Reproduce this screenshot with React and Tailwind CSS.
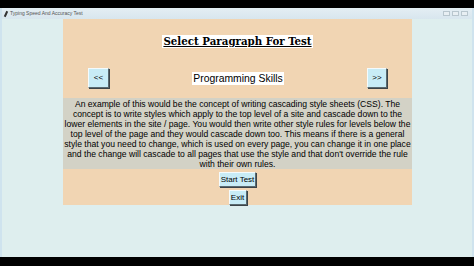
import React from 'react';

const lines = [
  'An example of this would be the concept of writing cascading style sheets (CSS). The',
  'concept is to write styles which apply to the top level of a site and cascade down to the',
  'lower elements in the site / page. You would then write other style rules for levels below the',
  'top level of the page and they would cascade down too. This means if there is a general',
  'style that you need to change, which is used on every page, you can change it in one place',
  "and the change will cascade to all pages that use the style and that don't override the rule",
  'with their own rules.',
];

const Btn = ({ children, className = '' }) => (
  <button
    className={
      'bg-[#c8ecf6] text-black leading-none border border-t-[#f4fbfd] border-l-[#f4fbfd] border-r-[#5a6a70] border-b-[#5a6a70] shadow-[1px_1px_0_#3c4448] ' +
      className
    }
    style={{ fontFamily: '"Liberation Sans", Arial, sans-serif' }}
  >
    {children}
  </button>
);

const App = () => {
  return (
    <div className="w-[474px] h-[266px] bg-black flex flex-col overflow-hidden">
      <div className="h-[8px] bg-black" />
      <div className="flex-1 flex flex-col bg-[#deeeee] border-l-2 border-r-2 border-[#cfe3ee]">
        {/* title bar */}
        <div className="h-[11px] flex items-center justify-between px-[3px] bg-gradient-to-b from-[#e4eef4] to-[#d8e6ee]">
          <div className="flex items-center gap-[3px]">
            <span className="w-[2px] h-[6px] bg-[#333] rotate-[25deg] inline-block" />
            <span
              className="text-[5px] text-[#555] leading-none"
              style={{ fontFamily: '"Liberation Sans", Arial, sans-serif' }}
            >
              Typing Speed And Accuracy Test
            </span>
          </div>
          <div className="flex gap-[2px] mr-[1px]">
            <span className="w-[7px] h-[5px] border border-[#b8c6ce] bg-[#e8eff3]" />
            <span className="w-[7px] h-[5px] border border-[#b8c6ce] bg-[#e8eff3]" />
            <span className="w-[7px] h-[5px] border border-[#b8c6ce] bg-[#e8eff3]" />
          </div>
        </div>

        {/* main panel */}
        <div className="flex-1">
          <div className="ml-[61px] w-[349px] h-[186px] bg-[#f1d5b3] flex flex-col items-center">
            <h1
              className="mt-[16px] bg-white px-[1px] text-[11.4px] leading-[13px] font-bold underline text-black whitespace-nowrap"
              style={{ fontFamily: '"DejaVu Serif Condensed", "DejaVu Serif", serif', fontStretch: 'condensed' }}
            >
              Select Paragraph For Test
            </h1>

            <div className="w-full mt-[20px] flex items-center justify-between pl-[25px] pr-[25px] h-[20px]">
              <Btn className="w-[21px] h-[20px] text-[8px]">&lt;&lt;</Btn>
              <span
                className="bg-white text-[10.4px] leading-[13px] px-[1px] text-black"
                style={{ fontFamily: '"Liberation Sans", Arial, sans-serif' }}
              >
                Programming Skills
              </span>
              <Btn className="w-[20px] h-[20px] text-[8px]">&gt;&gt;</Btn>
            </div>

            <div
              className="w-full mt-[10px] h-[72px] bg-[#d3d2c6] flex flex-col items-center justify-center text-center text-[8.6px] leading-[10px] text-black whitespace-nowrap"
              style={{ fontFamily: '"Liberation Sans", Arial, sans-serif' }}
            >
              {lines.map((l) => (
                <p key={l}>{l}</p>
              ))}
            </div>

            <Btn className="mt-[3px] w-[37px] h-[15px] text-[8px]">Start Test</Btn>
            <Btn className="mt-[3px] w-[18px] h-[15px] text-[8px]">Exit</Btn>
          </div>
        </div>
      </div>
      <div className="h-[9px] bg-black" />
    </div>
  );
};

export default App;
